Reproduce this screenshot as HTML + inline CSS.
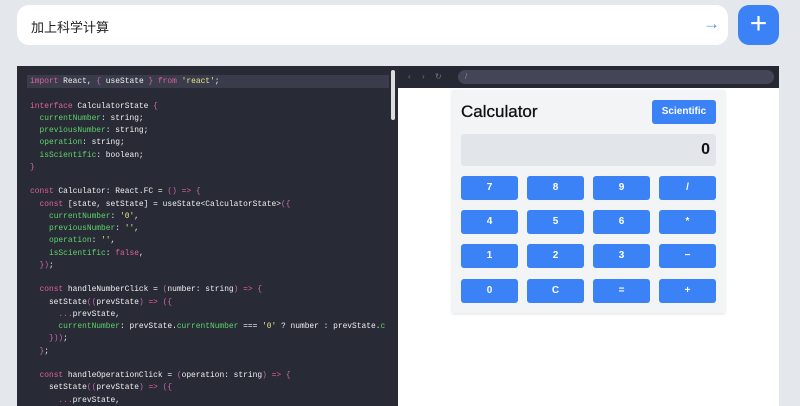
<!DOCTYPE html>
<html><head><meta charset="utf-8"><style>
*{margin:0;padding:0;box-sizing:border-box}
body{width:800px;height:406px;background:#e4e7eb;position:relative;overflow:hidden;font-family:"Liberation Sans","Noto Sans CJK SC",sans-serif}
.inp{position:absolute;left:17px;top:5px;width:711px;height:40px;background:#fff;border-radius:12px}
.inp span{position:absolute;left:14px;top:12px;font-size:13px;color:#222}
.inp i{position:absolute;right:8px;top:9px;font-style:normal;color:#5b8ff0;font-size:17px}
.plus{position:absolute;left:738px;top:5px;width:41px;height:40px;background:#3b82f6;border-radius:11px;color:#fff;font-size:30px;text-align:center;line-height:38px;font-weight:300}
.code{position:absolute;left:17px;top:66px;width:381px;height:340px;background:#282a36;overflow:hidden}
.hl{position:absolute;left:10px;top:9px;width:362px;height:13px;background:#3a3c4b}
.sb{position:absolute;left:374px;top:4px;width:4px;height:50px;background:#ddd;border-radius:2px}
pre{position:absolute;left:13px;top:10px;font-family:"Liberation Mono",monospace;font-size:7.9px;line-height:12.25px;color:#f0f0f0}
.k{color:#e0609a}.g{color:#5fd36a}.s{color:#e6e68a}.p{color:#c968a8}
.br{position:absolute;left:398px;top:66px;width:381px;height:340px;background:#fff}
.bar{height:22px;background:#262833;position:relative}
.bar b{position:absolute;top:6px;color:#777;font-size:8px;font-weight:normal}
.url{position:absolute;left:60px;top:4px;width:316px;height:14px;background:#444658;border-radius:7px;color:#888;font-size:8px;padding-left:7px;line-height:14px}
.card{position:absolute;left:54px;top:24px;width:273px;height:223px;background:#f3f4f6;box-shadow:0 1px 3px rgba(0,0,0,.12)}
.t{position:absolute;left:9px;top:12px;font-size:17px;color:#111;-webkit-text-stroke:.3px #111}
.sci{position:absolute;left:200px;top:10px;width:64px;height:24px;background:#3b82f6;color:#fff;border-radius:3px;font-size:10px;font-weight:bold;text-align:center;line-height:24px}
.disp{position:absolute;left:9px;top:44px;width:255px;height:32px;background:#e2e5e9;border-radius:3px;text-align:right;padding-right:6px;font-size:16px;font-weight:bold;line-height:32px;color:#111}
.btn{position:absolute;width:57px;height:24px;background:#3b82f6;border-radius:3px;color:#fff;font-size:10px;font-weight:bold;text-align:center;line-height:24px}
</style></head><body>
<div class="inp"><span>加上科学计算</span><i>→</i></div>
<div class="plus">+</div>
<div class="code"><div class="hl"></div><div class="sb"></div>
<pre><span class="k">import</span> React, <span class="p">{</span> useState <span class="p">}</span> <span class="k">from</span> <span class="s">'react'</span>;

<span class="k">interface</span> CalculatorState <span class="p">{</span>
  <span class="g">currentNumber</span>: string;
  <span class="g">previousNumber</span>: string;
  <span class="g">operation</span>: string;
  <span class="g">isScientific</span>: boolean;
<span class="p">}</span>

<span class="k">const</span> Calculator: React.FC = <span class="p">()</span> <span class="k">=&gt;</span> <span class="p">{</span>
  <span class="k">const</span> [state, setState] = useState&lt;CalculatorState&gt;<span class="p">({</span>
    <span class="g">currentNumber</span>: <span class="s">'0'</span>,
    <span class="g">previousNumber</span>: <span class="s">''</span>,
    <span class="g">operation</span>: <span class="s">''</span>,
    <span class="g">isScientific</span>: <span class="k">false</span>,
  <span class="p">})</span>;

  <span class="k">const</span> handleNumberClick = <span class="p">(</span>number: string<span class="p">)</span> <span class="k">=&gt;</span> <span class="p">{</span>
    setState<span class="p">((</span>prevState<span class="p">)</span> <span class="k">=&gt;</span> <span class="p">({</span>
      <span class="k">...</span>prevState,
      <span class="g">currentNumber</span>: prevState.<span class="g">currentNumber</span> === <span class="s">'0'</span> ? number : prevState.<span class="g">c</span>
    <span class="p">}))</span>;
  <span class="p">}</span>;

  <span class="k">const</span> handleOperationClick = <span class="p">(</span>operation: string<span class="p">)</span> <span class="k">=&gt;</span> <span class="p">{</span>
    setState<span class="p">((</span>prevState<span class="p">)</span> <span class="k">=&gt;</span> <span class="p">({</span>
      <span class="k">...</span>prevState,
</pre></div>
<div class="br"><div class="bar"><b style="left:10px">‹</b><b style="left:24px">›</b><b style="left:37px">↻</b><div class="url">/</div></div>
<div class="card"><div class="t">Calculator</div><div class="sci">Scientific</div><div class="disp">0</div>
<div class="btn" style="left:9px;top:86px">7</div><div class="btn" style="left:75px;top:86px">8</div><div class="btn" style="left:141px;top:86px">9</div><div class="btn" style="left:207px;top:86px">/</div>
<div class="btn" style="left:9px;top:120px">4</div><div class="btn" style="left:75px;top:120px">5</div><div class="btn" style="left:141px;top:120px">6</div><div class="btn" style="left:207px;top:120px">*</div>
<div class="btn" style="left:9px;top:154px">1</div><div class="btn" style="left:75px;top:154px">2</div><div class="btn" style="left:141px;top:154px">3</div><div class="btn" style="left:207px;top:154px">−</div>
<div class="btn" style="left:9px;top:189px">0</div><div class="btn" style="left:75px;top:189px">C</div><div class="btn" style="left:141px;top:189px">=</div><div class="btn" style="left:207px;top:189px">+</div>
</div></div>
</body></html>
